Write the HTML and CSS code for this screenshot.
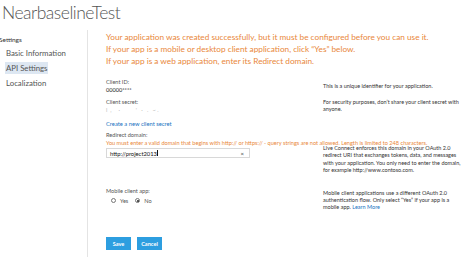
FILE: index.html
```html
<!DOCTYPE html>
<html>
<head>
<meta charset="utf-8">
<link rel="stylesheet" href="styles.css">
</head>
<body>
<div class="page">
  <h1 class="title">NearbaselineTest</h1>
  <div class="layout">
    <nav class="sidebar">
      <div class="nav-head">Settings</div>
      <div class="nav-item">Basic Information</div>
      <div class="nav-item active"><span>API Settings</span></div>
      <div class="nav-item">Localization</div>
    </nav>
    <main class="main">
      <div class="notice">
        <div>Your application was created successfully, but it must be configured before you can use it.</div>
        <div>If your app is a mobile or desktop client application, click “Yes” below.</div>
        <div>If your app is a web application, enter its Redirect domain.</div>
      </div>

      <div class="row row-id">
        <div class="field">
          <div class="label">Client ID:</div>
          <div class="value">00000****</div>
        </div>
        <div class="desc desc-id">This is a unique identifier for your application.</div>
      </div>

      <div class="row row-secret">
        <div class="field">
          <div class="label">Client secret:</div>
          <div class="value secret">l &nbsp;, &nbsp; &nbsp; · &nbsp; &nbsp; &nbsp; &nbsp; &nbsp; ' &nbsp; · &nbsp; . &nbsp; ~ .</div>
        </div>
        <div class="desc desc-secret">For security purposes, don’t share your client secret with anyone.</div>
      </div>

      <div class="link-row"><a class="link">Create a new client secret</a></div>

      <div class="row row-redirect">
        <div class="field">
          <div class="label">Redirect domain:</div>
          <div class="error">You must enter a valid domain that begins with http:// or https:// - query strings are not allowed. Length is limited to 248 characters.</div>
          <div class="input"><span class="input-text">http://project2013</span><span class="caret"></span><span class="clear">×</span></div>
        </div>
        <div class="desc desc-redirect">Live Connect enforces this domain in your OAuth 2.0 redirect URI that exchanges tokens, data, and messages with your application. You only need to enter the domain, for example http://www.contoso.com.</div>
      </div>

      <div class="row row-mobile">
        <div class="field">
          <div class="label">Mobile client app:</div>
          <div class="radios">
            <span class="radio"></span><span class="radio-label">Yes</span>
            <span class="radio checked"></span><span class="radio-label">No</span>
          </div>
        </div>
        <div class="desc desc-mobile">Mobile client applications use a different OAuth 2.0 authentication flow. Only select “Yes” if your app is a mobile app. <a class="link">Learn More</a></div>
      </div>

      <div class="buttons">
        <button class="btn">Save</button>
        <button class="btn">Cancel</button>
      </div>
    </main>
  </div>
</div>
</body>
</html>
```
FILE: styles.css
```css
html, body {
  margin: 0;
  padding: 0;
  background: #ffffff;
}
body {
  font-family: "Lato", "Open Sans", sans-serif;
  color: #444;
  width: 474px;
  height: 257px;
  overflow: hidden;
}
.title {
  margin: 0;
  padding: 1px 0 0 2px;
  height: 29px;
  font-size: 17.5px;
  line-height: 24px;
  font-weight: 300;
  color: #555;
  letter-spacing: -0.5px;
}
.layout {
  display: flex;
}
.sidebar {
  width: 88px;
  flex: none;
  border-right: 1px solid #e4e4e4;
  height: 228px;
  padding-top: 5px;
  box-sizing: border-box;
}
.nav-head {
  font-size: 6.5px;
  line-height: 10px;
  color: #333;
  margin-left: -1px;
  margin-bottom: 1px;
}
.nav-item {
  font-size: 7.8px;
  line-height: 15px;
  color: #555;
  padding-left: 6px;
}
.nav-item.active span {
  background: #dde7f2;
  padding: 1px 1px;
  margin-left: -1px;
}
.main {
  padding-left: 18px;
  padding-top: 1px;
  flex: 1;
}
.notice {
  color: #e9873a;
  font-size: 8.25px;
  line-height: 12px;
}
.row {
  display: flex;
}
.field {
  width: 217px;
  flex: none;
}
.label {
  font-size: 5.6px;
  line-height: 8px;
  color: #555;
}
.value {
  font-size: 5.6px;
  line-height: 8px;
  color: #222;
}
.secret {
  color: #bbb;
}
.desc {
  flex: 1;
  font-size: 5.5px;
  line-height: 7.4px;
  color: #333;
  padding-right: 8px;
}
.row-id {
  margin-top: 11px;
}
.desc-id {
  padding-top: 5px;
}
.row-secret {
  margin-top: 4px;
}
.desc-secret {
  padding-top: 1px;
}
.link-row {
  margin-top: 6px;
  font-size: 5.8px;
  line-height: 8px;
}
.link {
  color: #1a73c1;
}
.row-redirect {
  margin-top: 3px;
}
.error {
  color: #e9873a;
  font-size: 5.6px;
  line-height: 8px;
  white-space: nowrap;
}
.input {
  margin-top: 1px;
  width: 144px;
  height: 10px;
  border: 1px solid #d8d8d8;
  box-sizing: border-box;
  display: flex;
  align-items: center;
  padding-left: 3px;
  font-size: 5.8px;
  color: #111;
}
.caret {
  width: 0.6px;
  height: 6px;
  background: #111;
}
.clear {
  margin-left: auto;
  margin-right: 5px;
  font-size: 6px;
  color: #333;
}
.desc-redirect {
  padding-top: 14px;
}
.row-mobile {
  margin-top: 12px;
}
.radios {
  display: flex;
  align-items: center;
  margin-top: 2px;
  padding-left: 5px;
}
.radio {
  width: 5px;
  height: 5px;
  border: 0.6px solid #777;
  border-radius: 50%;
  box-sizing: border-box;
  position: relative;
}
.radio.checked::after {
  content: "";
  position: absolute;
  left: 1px;
  top: 1px;
  width: 2px;
  height: 2px;
  border-radius: 50%;
  background: #222;
}
.radio-label {
  font-size: 5.6px;
  color: #555;
  margin-left: 4px;
  margin-right: 7px;
}
.desc-mobile {
  padding-top: 3px;
}
.buttons {
  display: flex;
  gap: 6px;
  margin-top: 25px;
}
.btn {
  width: 25px;
  height: 13px;
  padding: 0;
  border: none;
  background: #2d9ee0;
  color: #fff;
  font-family: "Lato", "Open Sans", sans-serif;
  font-weight: 700;
  font-size: 5.6px;
}
```
